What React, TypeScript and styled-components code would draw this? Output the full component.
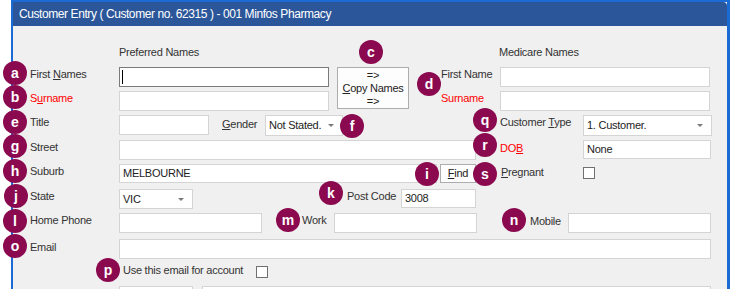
import styled, { createGlobalStyle } from "styled-components";

const GlobalStyle = createGlobalStyle`
  html, body {
    margin: 0;
    padding: 0;
    background: #fff;
  }
  body {
    font-family: "Liberation Sans", Arial, sans-serif;
  }
`;

const Page = styled.div`
  position: relative;
  width: 730px;
  height: 289px;
  overflow: hidden;
  background: #fff;
`;

const Window = styled.div`
  box-sizing: border-box;
  margin-left: 11px;
  width: 719px;
  height: 320px;
  border: solid #1a6bd3;
  border-width: 2px 3px 0 2px;
  background: #f0f0f0;
`;

const TitleBar = styled.div`
  height: 24px;
  padding-left: 6px;
  background: #2b579a;
  border-top-right-radius: 4px;
  color: #fff;
  font-size: 12px;
  letter-spacing: -0.42px;
  line-height: 24px;
  white-space: nowrap;
`;

const Form = styled.div`
  padding-top: 19px;
  font-size: 11px;
  letter-spacing: -0.25px;
  color: #333;
`;

const Row = styled.div<{ $mt?: number; $h?: number }>`
  display: flex;
  align-items: flex-start;
  height: ${(p) => p.$h ?? 20}px;
  margin-top: ${(p) => p.$mt ?? 0}px;
`;

const NamesBlock = styled.div<{ $mt?: number }>`
  display: flex;
  align-items: flex-start;
  margin-top: ${(p) => p.$mt ?? 0}px;
`;

const Column = styled.div<{ $ml?: number }>`
  display: flex;
  flex-direction: column;
  gap: 4px;
  margin-left: ${(p) => p.$ml ?? 0}px;
`;

const Label = styled.label<{ $ml?: number; $w?: number; $red?: boolean; $pt?: number }>`
  flex: none;
  box-sizing: border-box;
  margin-left: ${(p) => p.$ml ?? 0}px;
  width: ${(p) => (p.$w ? `${p.$w}px` : "auto")};
  padding-top: ${(p) => p.$pt ?? 0}px;
  line-height: 14px;
  color: ${(p) => (p.$red ? "#ff0000" : "#333")};
  white-space: nowrap;

  u {
    text-underline-offset: 1px;
  }
`;

const Field = styled.div<{ $ml?: number; $w: number; $h?: number; $focus?: boolean }>`
  flex: none;
  position: relative;
  box-sizing: border-box;
  margin-left: ${(p) => p.$ml ?? 0}px;
  width: ${(p) => p.$w}px;
  height: ${(p) => p.$h ?? 20}px;
  padding: 0 3px;
  background: #fff;
  border: 1px solid ${(p) => (p.$focus ? "#7a7a7a" : "#d4d4d4")};
  color: #222;
  line-height: ${(p) => (p.$h ?? 20) - 2}px;
  white-space: nowrap;
`;

const Select = styled(Field)`
  display: flex;
  align-items: center;
  justify-content: space-between;
  padding-right: 8px;
`;

const Arrow = styled.span`
  width: 0;
  height: 0;
  border-left: 3px solid transparent;
  border-right: 3px solid transparent;
  border-top: 3px solid #7a7a7a;
`;

const Caret = styled.span`
  position: absolute;
  left: 2px;
  top: 2px;
  width: 1px;
  height: 14px;
  background: #000;
`;

const CopyButton = styled.div<{ $ml?: number }>`
  flex: none;
  box-sizing: border-box;
  display: flex;
  flex-direction: column;
  align-items: center;
  justify-content: center;
  margin-left: ${(p) => p.$ml ?? 0}px;
  width: 72px;
  height: 42px;
  background: #fdfdfd;
  border: 1px solid #adadad;
  line-height: 13px;
  color: #222;
`;

const SmallButton = styled.div<{ $ml?: number; $w: number; $h?: number }>`
  flex: none;
  box-sizing: border-box;
  margin-left: ${(p) => p.$ml ?? 0}px;
  width: ${(p) => p.$w}px;
  height: ${(p) => p.$h ?? 19}px;
  background: #fdfdfd;
  border: 1px solid #adadad;
  text-align: center;
  line-height: ${(p) => (p.$h ?? 19) - 2}px;
  color: #222;
`;

const Checkbox = styled.span<{ $mt?: number }>`
  flex: none;
  box-sizing: border-box;
  width: 12px;
  height: 12px;
  margin-top: ${(p) => p.$mt ?? 0}px;
  background: #fff;
  border: 1px solid #707070;
`;

const Badge = styled.span`
  position: absolute;
  width: 24px;
  height: 24px;
  border-radius: 50%;
  background: #8b0a4f;
  color: #fff;
  font-family: "Liberation Sans", Arial, sans-serif;
  font-size: 14px;
  font-weight: bold;
  display: flex;
  align-items: center;
  justify-content: center;
`;

const badges: [string, number, number][] = [
  ["a", 15, 73],
  ["b", 15, 97],
  ["e", 15, 122],
  ["g", 15, 146],
  ["h", 15, 171],
  ["j", 16, 196],
  ["l", 15, 221],
  ["o", 15, 246],
  ["p", 108, 270],
  ["c", 371, 52],
  ["d", 429, 84],
  ["f", 352, 126],
  ["q", 485, 120],
  ["r", 485, 145],
  ["i", 427, 174],
  ["s", 485, 174],
  ["k", 331, 193],
  ["m", 288, 220],
  ["n", 514, 220],
];

export default function App() {
  return (
    <Page>
      <GlobalStyle />
      <Window>
        <TitleBar>Customer Entry ( Customer no. 62315 ) - 001 Minfos Pharmacy</TitleBar>
        <Form>
          <Row $h={14}>
            <Label $ml={106} $w={380}>Preferred Names</Label>
            <Label>Medicare Names</Label>
          </Row>

          <NamesBlock $mt={8}>
            <Column>
              <Row>
                <Label $ml={17} $w={89}>
                  First <u>N</u>ames
                </Label>
                <Field $w={210} $focus>
                  <Caret />
                </Field>
              </Row>
              <Row>
                <Label $ml={17} $w={89} $red>
                  S<u>u</u>rname
                </Label>
                <Field $w={210} />
              </Row>
            </Column>
            <CopyButton $ml={8}>
              <span>=&gt;</span>
              <span>
                <u>C</u>opy Names
              </span>
              <span>=&gt;</span>
            </CopyButton>
            <Column $ml={32}>
              <Row>
                <Label $w={59}>First Name</Label>
                <Field $w={210} />
              </Row>
              <Row>
                <Label $w={59} $red>
                  Surname
                </Label>
                <Field $w={210} />
              </Row>
            </Column>
          </NamesBlock>

          <Row $mt={4} $h={21}>
            <Label $ml={17} $w={89}>Title</Label>
            <Field $w={90} />
            <Label $ml={13} $w={43} $pt={2}>
              <u>G</u>ender
            </Label>
            <Select $w={78} $h={21}>
              Not Stated.
              <Arrow />
            </Select>
            <Label $ml={157} $w={83}>
              Customer <u>T</u>ype
            </Label>
            <Select $w={129} $h={21}>
              1. Customer.
              <Arrow />
            </Select>
          </Row>

          <Row $mt={4}>
            <Label $ml={17} $w={89}>Street</Label>
            <Field $w={357} />
            <Label $ml={24} $w={83} $pt={1} $red>
              DO<u>B</u>
            </Label>
            <Field $w={128} $h={19}>
              None
            </Field>
          </Row>

          <Row $mt={4}>
            <Label $ml={17} $w={89}>Suburb</Label>
            <Field $w={318} $h={19}>
              MELBOURNE
            </Field>
            <SmallButton $ml={3} $w={36}>
              <u>F</u>ind
            </SmallButton>
            <Label $ml={25} $w={82} $pt={1}>
              <u>P</u>regnant
            </Label>
            <Checkbox $mt={3} />
          </Row>

          <Row $mt={5}>
            <Label $ml={17} $w={89}>State</Label>
            <Select $w={74}>
              VIC
              <Arrow />
            </Select>
            <Label $ml={154} $w={54}>Post Code</Label>
            <Field $w={75} $h={19}>
              3008
            </Field>
          </Row>

          <Row $mt={4}>
            <Label $ml={17} $w={89}>Home Phone</Label>
            <Field $w={143} />
            <Label $ml={40} $w={32}>Work</Label>
            <Field $w={143} />
            <Label $ml={53} $w={38} $pt={1}>
              Mobile
            </Label>
            <Field $w={143} />
          </Row>

          <Row $mt={6}>
            <Label $ml={17} $w={89} $pt={1}>
              Email
            </Label>
            <Field $w={592} />
          </Row>

          <Row $mt={4} $h={14}>
            <Label $ml={110} $w={133}>Use this email for account</Label>
            <Checkbox $mt={3} />
          </Row>

          <Row $mt={9}>
            <Label $ml={17} $w={89}>
              Entitlement No.
            </Label>
            <Field $w={74} />
            <Field $ml={9} $w={509} />
          </Row>
        </Form>
      </Window>
      {badges.map(([letter, x, y]) => (
        <Badge key={letter} style={{ left: x - 12, top: y - 12 }}>
          {letter}
        </Badge>
      ))}
    </Page>
  );
}
